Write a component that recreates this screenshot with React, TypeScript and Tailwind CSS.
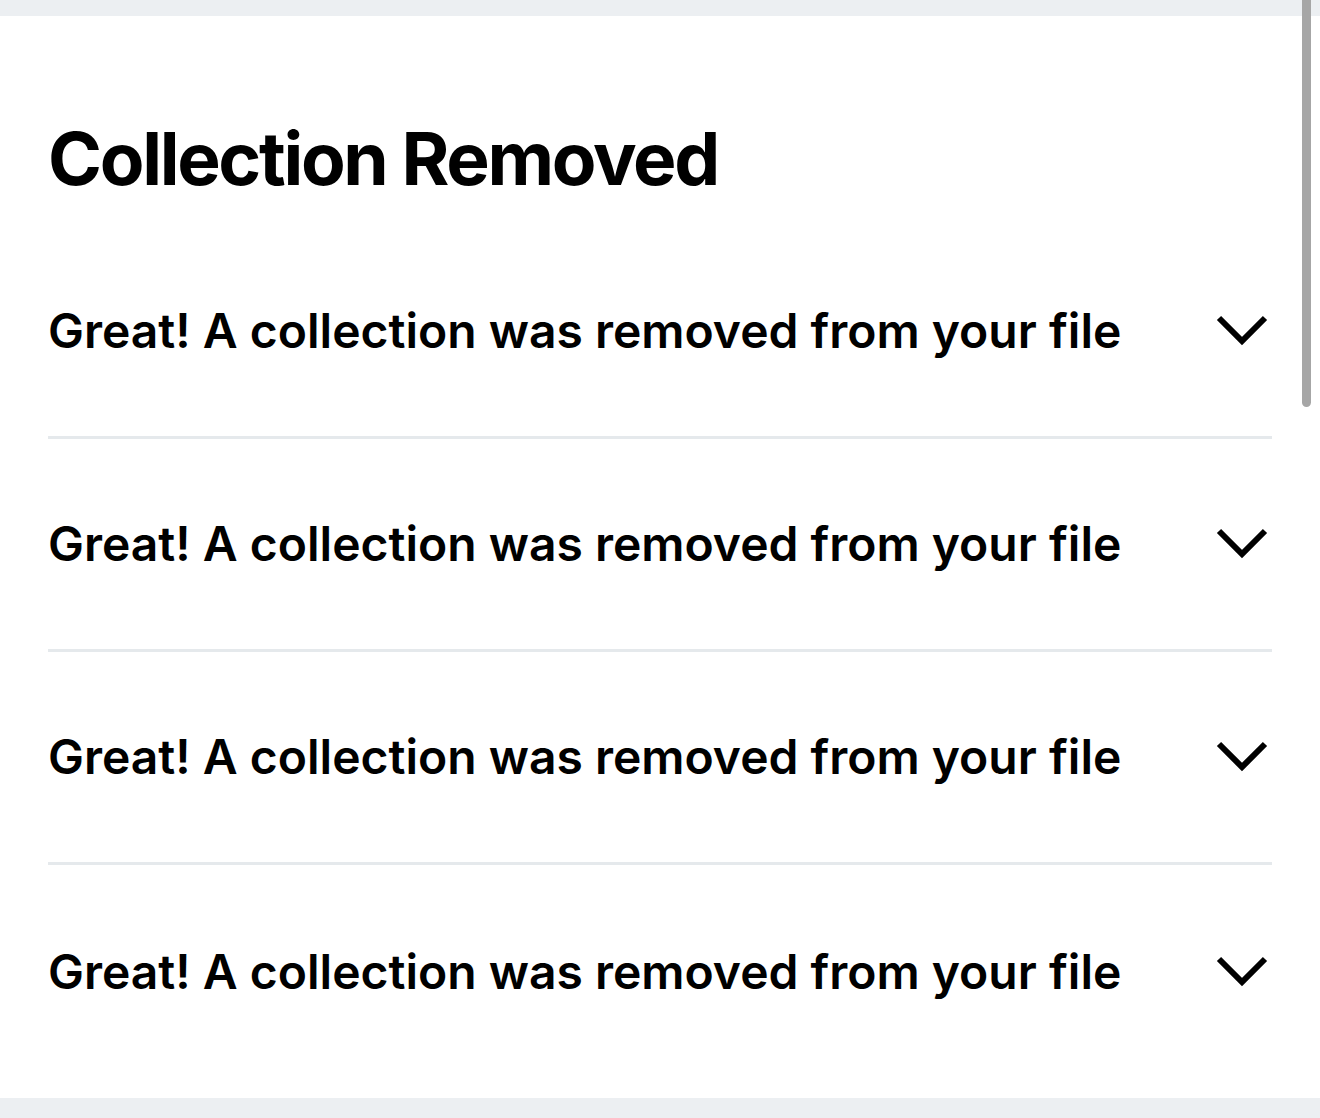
import { useState } from 'react'

const MESSAGES = [
  { id: 1, text: 'Great! A collection was removed from your file' },
  { id: 2, text: 'Great! A collection was removed from your file' },
  { id: 3, text: 'Great! A collection was removed from your file' },
  { id: 4, text: 'Great! A collection was removed from your file' },
]

function Chevron() {
  return (
    <svg width="56" height="36" viewBox="0 0 56 36" fill="none" className="shrink-0">
      <polyline points="5,5 28,28 51,5" stroke="#000" strokeWidth="6" strokeLinejoin="miter" />
    </svg>
  )
}

export default function App() {
  const [items] = useState(MESSAGES)

  return (
    <div className="relative h-[1118px] overflow-hidden bg-white flex flex-col" style={{ fontFamily: 'Inter, "Noto Sans", sans-serif' }}>
      <div className="h-[16px] bg-[#eceff2] shrink-0" />

      <div className="flex-1 px-[48px] pt-[106px]">
        <h1 className="text-[73px] leading-none font-bold text-black tracking-[-2.3px]">Collection Removed</h1>

        <div className="mt-[31px]">
          {items.map((m, i) => (
            <div
              key={m.id}
              className={
                'h-[213px] flex items-center justify-between pr-[2px] ' +
                (i < items.length - 1 ? 'border-b-[3px] border-[#e5e9ec]' : '')
              }
            >
              <p className="text-[48px] leading-none font-semibold text-black">{m.text}</p>
              <Chevron />
            </div>
          ))}
        </div>
      </div>

      <div className="h-[20px] bg-[#eceff2] shrink-0" />

      {/* overlay scrollbar */}
      <div className="absolute top-0 right-[9px] w-[9px] h-[407px] rounded-b-full bg-[#a6a6a6]" />
    </div>
  )
}
